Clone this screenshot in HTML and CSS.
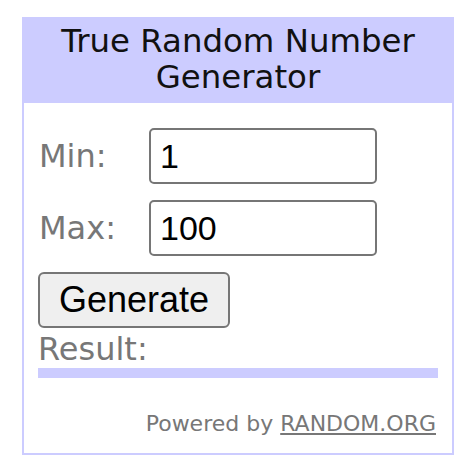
FILE: index.html
```html
<!DOCTYPE html>
<html>
<head>
    <meta charset="UTF-8">
    <title>True Random Number Generator</title>
    <link rel="stylesheet" href="styles.css">
</head>
<body>
<div class="widget">
    <div class="widget-title">True Random Number Generator</div><!-- Header -->
    <div class="widget-body">
        <div class="field-row">
            <label class="field-label" for="min">Min:</label>
            <input id="min" class="field-input" type="text" value="1">
        </div>
        <div class="field-row">
            <label class="field-label" for="max">Max:</label>
            <input id="max" class="field-input" type="text" value="100">
        </div>
        <div><!-- Button -->
            <button class="button" type="button">Generate</button>
        </div>
        <div class="result-label">Result:</div>
        <div class="result-bar"></div>
        <div class="powered">Powered by <a href="#">RANDOM.ORG</a></div>
    </div>
</div>
</body>
</html>
```

FILE: styles.css
```css
body {
    margin: 0;
    padding: 17px 20px 0 22px;
    font-family: "DejaVu Sans", Verdana, sans-serif;
    background-color: white;
}

.widget {
    width: 428px;
    border: 2px solid #ccccff;
}

/* Header */
.widget-title {
    background-color: #ccccff;
    color: #111;
    font-size: 32.4px;
    line-height: 36px;
    text-align: center;
    padding: 4px 10px 8px;
}

.widget-body {
    padding: 25px 14px 17px;
}

/* Min / Max rows */
.field-row {
    display: flex;
    align-items: center;
    margin-bottom: 16px;
}

.field-label {
    width: 110px;
    padding-left: 1px;
    font-size: 32px;
    color: #777;
}

.field-input {
    width: 228px;
    height: 56px;
    box-sizing: border-box;
    padding: 0 9px;
    font-family: "Liberation Sans", Arial, sans-serif;
    font-size: 34px;
    color: black;
    border: 2px solid #767676;
    border-radius: 5px;
}

/* Button */
.button {
    width: 192px;
    height: 56px;
    font-family: "Liberation Sans", Arial, sans-serif;
    font-size: 36px;
    color: black;
    background-color: #efefef;
    border: 2px solid #767676;
    border-radius: 6px;
    padding: 0;
}

.result-label {
    font-size: 32px;
    color: #777;
    line-height: 37px;
    margin-top: 3px;
}

.result-bar {
    height: 10px;
    background-color: #ccccff;
}

.powered {
    margin-top: 33px;
    text-align: right;
    font-size: 22px;
    color: #777;
    padding-right: 2px;
}

.powered a {
    color: #777;
}
```
